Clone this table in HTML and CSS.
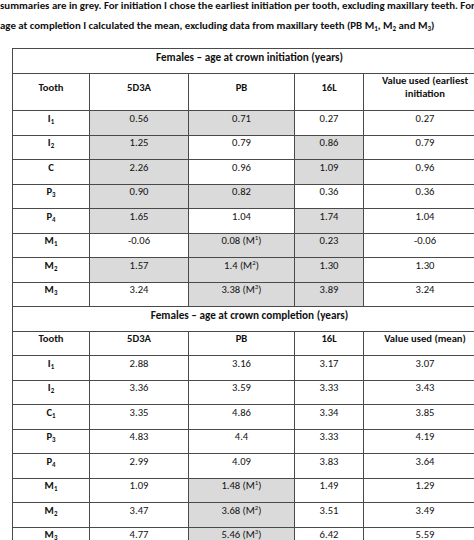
FILE: index.html
```html
<!DOCTYPE html>
<html>
<head>
<meta charset="utf-8">
<link rel="stylesheet" href="styles.css">
</head>
<body>
<p class="intro">summaries are in grey. For initiation I chose the earliest initiation per tooth, excluding maxillary teeth. For<br>age at completion I calculated the mean, excluding data from maxillary teeth (PB M<sub>1</sub>, M<sub>2</sub> and M<sub>3</sub>)</p>
<table class="data">
  <colgroup>
    <col class="c-tooth"><col class="c-a"><col class="c-pb"><col class="c-l"><col class="c-v">
  </colgroup>
  <tr class="title"><td colspan="5">Females – age at crown initiation (years)</td></tr>
  <tr class="head head-tall"><td>Tooth</td><td>5D3A</td><td>PB</td><td>16L</td><td>Value used (earliest<br>initiation</td></tr>
  <tr><th>I<sub>1</sub></th><td class="g">0.56</td><td class="g">0.71</td><td>0.27</td><td>0.27</td></tr>
  <tr><th>I<sub>2</sub></th><td class="g">1.25</td><td>0.79</td><td class="g">0.86</td><td>0.79</td></tr>
  <tr><th>C</th><td class="g">2.26</td><td>0.96</td><td class="g">1.09</td><td>0.96</td></tr>
  <tr><th>P<sub>3</sub></th><td class="g">0.90</td><td class="g">0.82</td><td>0.36</td><td>0.36</td></tr>
  <tr><th>P<sub>4</sub></th><td class="g">1.65</td><td>1.04</td><td class="g">1.74</td><td>1.04</td></tr>
  <tr><th>M<sub>1</sub></th><td>-0.06</td><td class="g">0.08 (M<sup>1</sup>)</td><td class="g">0.23</td><td>-0.06</td></tr>
  <tr><th>M<sub>2</sub></th><td class="g">1.57</td><td class="g">1.4 (M<sup>2</sup>)</td><td class="g">1.30</td><td>1.30</td></tr>
  <tr><th>M<sub>3</sub></th><td>3.24</td><td class="g">3.38 (M<sup>3</sup>)</td><td class="g">3.89</td><td>3.24</td></tr>
  <tr class="title"><td colspan="5">Females – age at crown completion (years)</td></tr>
  <tr class="head"><td>Tooth</td><td>5D3A</td><td>PB</td><td>16L</td><td>Value used (mean)</td></tr>
  <tr><th>I<sub>1</sub></th><td>2.88</td><td>3.16</td><td>3.17</td><td>3.07</td></tr>
  <tr><th>I<sub>2</sub></th><td>3.36</td><td>3.59</td><td>3.33</td><td>3.43</td></tr>
  <tr><th>C<sub>1</sub></th><td>3.35</td><td>4.86</td><td>3.34</td><td>3.85</td></tr>
  <tr><th>P<sub>3</sub></th><td>4.83</td><td>4.4</td><td>3.33</td><td>4.19</td></tr>
  <tr><th>P<sub>4</sub></th><td>2.99</td><td>4.09</td><td>3.83</td><td>3.64</td></tr>
  <tr><th>M<sub>1</sub></th><td>1.09</td><td class="g">1.48 (M<sup>1</sup>)</td><td>1.49</td><td>1.29</td></tr>
  <tr><th>M<sub>2</sub></th><td>3.47</td><td class="g">3.68 (M<sup>2</sup>)</td><td>3.51</td><td>3.49</td></tr>
  <tr><th>M<sub>3</sub></th><td>4.77</td><td class="g">5.46 (M<sup>3</sup>)</td><td>6.42</td><td>5.59</td></tr>
</table>
</body>
</html>
```
FILE: styles.css
```css
html, body {
  margin: 0;
  padding: 0;
  background: #ffffff;
  overflow: hidden;
}
body {
  width: 474px;
  height: 540px;
  font-family: Carlito, Lato, "Open Sans", sans-serif;
  color: #111111;
}
.intro {
  margin: -4px 0 0 0;
  font-size: 10.85px;
  font-weight: 700;
  line-height: 19.5px;
  white-space: nowrap;
}
sub, sup {
  font-size: 0.65em;
  line-height: 0;
}
sub { vertical-align: -0.25em; }
sup { vertical-align: 0.6em; }
.data {
  margin: 13px 0 0 12px;
  width: 474px;
  border-collapse: collapse;
  table-layout: fixed;
  font-size: 10.6px;
  line-height: 12.5px;
}
.c-tooth { width: 77px; }
.c-a { width: 99px; }
.c-pb { width: 106px; }
.c-l { width: 69px; }
.c-v { width: 123px; }
.data td, .data th {
  border: 1px solid #4a4a4a;
  padding: 0 2px 8px;
  text-align: center;
  vertical-align: middle;
  font-weight: 400;
  white-space: nowrap;
}
.data th { font-weight: 700; }
.data tr { height: 24.5px; }
.data tr.head-tall { height: 37.5px; }
.data tr.title td, .data tr.head td { font-weight: 700; }
.data tr.title td { font-size: 11.2px; }
.data td.g { background: #dadada; }
```
